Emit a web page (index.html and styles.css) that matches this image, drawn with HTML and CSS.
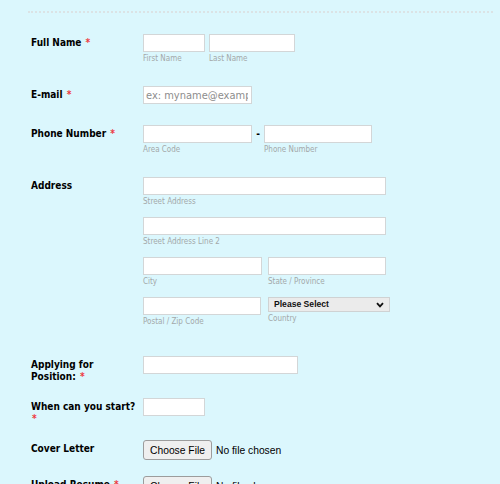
FILE: index.html
```html
<!DOCTYPE html>
<html lang="en">
<head>
<meta charset="utf-8">
<title>Application Form</title>
<link rel="stylesheet" href="styles.css">
</head>
<body>
<div class="form">
  <div class="divider"></div>
  <ul class="fields">
    <li class="row">
      <label class="label">Full Name <span class="req">*</span></label>
      <div class="field">
        <div class="group gap4">
          <span class="sub-field"><input class="text w62" type="text"><span class="sub">First Name</span></span>
          <span class="sub-field"><input class="text w86" type="text"><span class="sub">Last Name</span></span>
        </div>
      </div>
    </li>
    <li class="row">
      <label class="label">E-mail <span class="req">*</span></label>
      <div class="field">
        <input class="text w109 email" type="email" placeholder="ex: myname@example.com">
      </div>
    </li>
    <li class="row">
      <label class="label">Phone Number <span class="req">*</span></label>
      <div class="field">
        <div class="group">
          <span class="sub-field"><input class="text w109" type="tel"><span class="sub">Area Code</span></span>
          <span class="dash">-</span>
          <span class="sub-field"><input class="text w108" type="tel"><span class="sub">Phone Number</span></span>
        </div>
      </div>
    </li>
    <li class="row address">
      <label class="label">Address</label>
      <div class="field">
        <div class="addr-line sub-field"><input class="text w243" type="text"><span class="sub">Street Address</span></div>
        <div class="addr-line sub-field"><input class="text w243" type="text"><span class="sub">Street Address Line 2</span></div>
        <div class="addr-line group gap6">
          <span class="sub-field"><input class="text w119" type="text"><span class="sub">City</span></span>
          <span class="sub-field"><input class="text w118" type="text"><span class="sub">State / Province</span></span>
        </div>
        <div class="group gap7">
          <span class="sub-field"><input class="text w118" type="text"><span class="sub">Postal / Zip Code</span></span>
          <span class="sub-field">
            <span class="select-wrap">
              <select class="select"><option>Please Select</option></select>
              <svg class="chevron" width="8" height="6" viewBox="0 0 8 6"><path d="M1 1.2 L4 4.4 L7 1.2" fill="none" stroke="#111" stroke-width="1.8"/></svg>
            </span>
            <span class="sub">Country</span>
          </span>
        </div>
      </div>
    </li>
    <li class="row compact">
      <label class="label">Applying for Position: <span class="req">*</span></label>
      <div class="field">
        <input class="text w155" type="text">
      </div>
    </li>
    <li class="row compact">
      <label class="label">When can you start? <span class="req">*</span></label>
      <div class="field">
        <input class="text w62" type="text">
      </div>
    </li>
    <li class="row file compact6">
      <label class="label">Cover Letter</label>
      <div class="field">
        <input class="file-input" type="file">
      </div>
    </li>
    <li class="row file">
      <label class="label">Upload Resume <span class="req">*</span></label>
      <div class="field">
        <input class="file-input" type="file">
      </div>
    </li>
  </ul>
</div>
</body>
</html>
```

FILE: styles.css
```css
html, body {
  margin: 0;
  background: #dbf7fd;
}
body {
  font-family: "DejaVu Sans Condensed", "DejaVu Sans", sans-serif;
  font-stretch: condensed;
  color: #000;
}
.form {
  padding: 11px 7px 0 28px;
}
.divider {
  border-top: 2px dotted #dbe3e5;
}
.fields {
  list-style: none;
  margin: 0;
  padding: 11px 0 0 3px;
}
.row {
  display: flex;
  align-items: flex-start;
  padding: 10px 0 11px;
}
.row.address {
  padding-bottom: 18px;
}
.row.compact {
  padding-bottom: 5px;
}
.row.compact6 {
  padding-bottom: 6px;
}
.label {
  flex: none;
  width: 112px;
  box-sizing: border-box;
  padding: 3px 4px 0 0;
  font-size: 10px;
  line-height: 12px;
  font-weight: bold;
}
.row.file .label {
  padding-top: 3px;
}
.req {
  color: #ee3a3f;
  font-size: 10px;
  line-height: 10px;
  margin-left: 1px;
}
.field {
  flex: 1;
  min-width: 0;
  font-size: 10px;
  line-height: 12px;
}
.group {
  display: flex;
  align-items: flex-start;
}
.gap4 { gap: 4px; }
.gap6 { gap: 6px; }
.gap7 { gap: 7px; }
.sub-field {
  display: flex;
  flex-direction: column;
  align-items: flex-start;
}
.addr-line {
  margin-bottom: 9px;
}
.sub {
  margin-top: 1px;
  font-size: 8px;
  line-height: 12px;
  color: #a3a8a9;
  white-space: nowrap;
}
.text {
  display: block;
  box-sizing: border-box;
  height: 18px;
  margin: 0;
  padding: 0 3px;
  border: 1px solid #d3d6d7;
  border-radius: 0;
  background: #fff;
  font-family: "DejaVu Sans Condensed", "DejaVu Sans", sans-serif;
  font-stretch: condensed;
  font-size: 10px;
  color: #333;
  outline: none;
}
.text.email {
  font-size: 11px;
  padding-left: 2px;
}
.text::placeholder {
  color: #8d8d8d;
}
.w62 { width: 62px; }
.w86 { width: 86px; }
.w108 { width: 108px; }
.w109 { width: 109px; }
.w118 { width: 118px; }
.w119 { width: 119px; }
.w155 { width: 155px; }
.w243 { width: 243px; }
.dash {
  width: 12px;
  text-align: center;
  font-size: 10px;
  font-weight: bold;
  line-height: 18px;
}
.select-wrap {
  position: relative;
  display: block;
  width: 122px;
  height: 15px;
}
.select {
  appearance: none;
  -webkit-appearance: none;
  box-sizing: border-box;
  display: block;
  width: 122px;
  height: 15px;
  margin: 0;
  padding: 0 0 0 5px;
  border: 1px solid #cfd2d3;
  border-radius: 0;
  background: #ebebeb;
  font-family: "Liberation Sans", Arial, sans-serif;
  font-size: 8.6px;
  font-weight: bold;
  color: #111;
  line-height: 13px;
}
.chevron {
  position: absolute;
  right: 6px;
  top: 5px;
  pointer-events: none;
}
.file-input {
  display: block;
  margin: 0;
  font-family: "Liberation Sans", Arial, sans-serif;
  font-size: 10.3px;
  color: #000;
  height: 20px;
  line-height: 20px;
}
.file-input::file-selector-button {
  font: inherit;
  height: 20px;
  margin: 0 4px 0 0;
  padding: 0 6px;
  border: 1px solid #9c9c9c;
  border-radius: 3px;
  background: #efefef;
  color: #000;
}
```
